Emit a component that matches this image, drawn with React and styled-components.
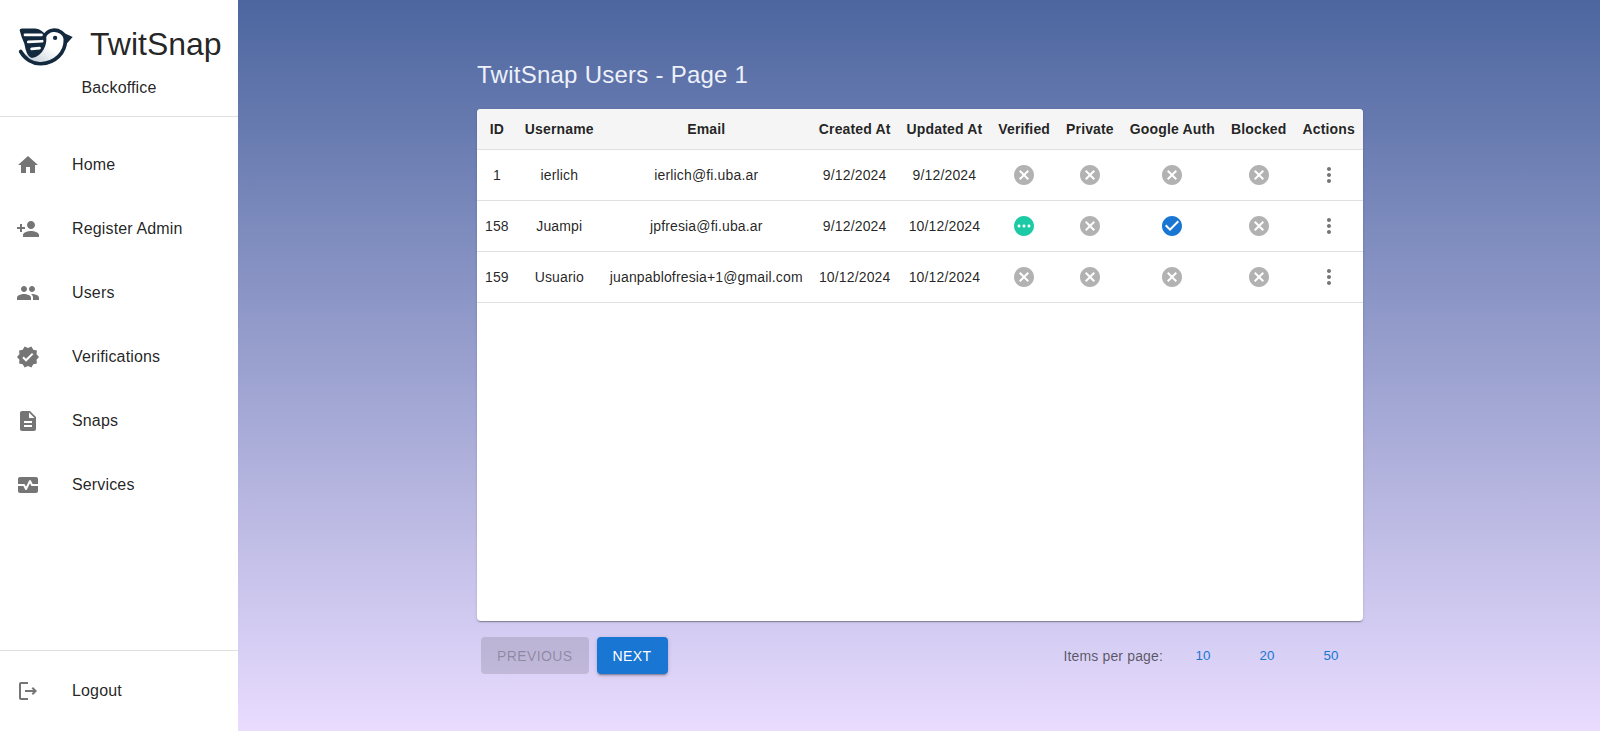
import React from 'react';
import styled, { createGlobalStyle } from 'styled-components';

const GlobalStyle = createGlobalStyle`
  html, body {
    margin: 0;
    padding: 0;
    height: 100%;
    overflow: hidden;
  }
  body {
    font-family: "Liberation Sans", Arial, sans-serif;
    color: rgba(0, 0, 0, 0.87);
  }
`;

const ICONS = {
  home: 'M10 20v-6h4v6h5v-8h3L12 3 2 12h3v8z',
  personAdd: 'M15 12c2.21 0 4-1.79 4-4s-1.79-4-4-4-4 1.79-4 4 1.79 4 4 4m-9-2V7H4v3H1v2h3v3h2v-3h3v-2zm9 4c-2.67 0-8 1.34-8 4v2h16v-2c0-2.66-5.33-4-8-4',
  people: 'M16 11c1.66 0 2.99-1.34 2.99-3S17.66 5 16 5s-3 1.34-3 3 1.34 3 3 3m-8 0c1.66 0 2.99-1.34 2.99-3S9.66 5 8 5 5 6.34 5 8s1.34 3 3 3m0 2c-2.33 0-7 1.17-7 3.5V19h14v-2.5c0-2.33-4.67-3.5-7-3.5m8 0c-.29 0-.62.02-.97.05 1.16.84 1.97 1.97 1.97 3.45V19h6v-2.5c0-2.33-4.67-3.5-7-3.5',
  verified: 'M23 12l-2.44-2.79.34-3.69-3.61-.82-1.89-3.2L12 2.96 8.6 1.5 6.71 4.69 3.1 5.5l.34 3.7L1 12l2.44 2.79-.34 3.7 3.61.82L8.6 22.5l3.4-1.47 3.4 1.46 1.89-3.19 3.61-.82-.34-3.69zm-12.91 4.72-3.8-3.81 1.48-1.48 2.32 2.33 5.85-5.87 1.48 1.48z',
  description: 'M14 2H6c-1.1 0-1.99.9-1.99 2L4 20c0 1.1.89 2 1.99 2H18c1.1 0 2-.9 2-2V8zm2 16H8v-2h8zm0-4H8v-2h8zm-3-5V3.5L18.5 9z',
  monitor: 'M15.11 12.45 14 10.24l-3.11 6.21c-.16.34-.51.55-.89.55s-.73-.21-.89-.55L7.38 13H2v5c0 1.1.9 2 2 2h16c1.1 0 2-.9 2-2v-5h-6c-.38 0-.73-.21-.89-.55M22 6c0-1.1-.9-2-2-2H4c-1.1 0-2 .9-2 2v5h6c.38 0 .73.21.89.55L10 13.76l3.11-6.21c.34-.68 1.45-.68 1.79 0L16.62 11H22z',
  logout: 'M17 8l-1.41 1.41L17.17 11H9v2h8.17l-1.58 1.58L17 16l4-4zM5 5h7V3H5c-1.1 0-2 .9-2 2v14c0 1.1.9 2 2 2h7v-2H5z',
  cancel: 'M12 2C6.47 2 2 6.47 2 12s4.47 10 10 10 10-4.47 10-10S17.53 2 12 2m5 13.59L15.59 17 12 13.41 8.41 17 7 15.59 10.59 12 7 8.41 8.41 7 12 10.59 15.59 7 17 8.41 13.41 12 17 15.59z',
  check: 'M12 2C6.48 2 2 6.48 2 12s4.48 10 10 10 10-4.48 10-10S17.52 2 12 2m-2 15-5-5 1.41-1.41L10 14.17l7.59-7.59L19 8z',
  pending: 'M12 2C6.48 2 2 6.48 2 12s4.48 10 10 10 10-4.48 10-10S17.52 2 12 2M7 13.5c-.83 0-1.5-.67-1.5-1.5s.67-1.5 1.5-1.5 1.5.67 1.5 1.5-.67 1.5-1.5 1.5m5 0c-.83 0-1.5-.67-1.5-1.5s.67-1.5 1.5-1.5 1.5.67 1.5 1.5-.67 1.5-1.5 1.5m5 0c-.83 0-1.5-.67-1.5-1.5s.67-1.5 1.5-1.5 1.5.67 1.5 1.5-.67 1.5-1.5 1.5',
  more: 'M12 8c1.1 0 2-.9 2-2s-.9-2-2-2-2 .9-2 2 .9 2 2 2m0 2c-1.1 0-2 .9-2 2s.9 2 2 2 2-.9 2-2-.9-2-2-2m0 6c-1.1 0-2 .9-2 2s.9 2 2 2 2-.9 2-2-.9-2-2-2',
};

const STATUS_COLORS = {
  cancel: '#b2b2b2',
  check: '#1976d2',
  pending: '#1ccba5',
  more: '#757575',
};

const Page = styled.div`
  display: flex;
  height: 731px;
  background: linear-gradient(180deg, #4c669f 0%, #e9dcff 100%);
`;

const Sidebar = styled.aside`
  width: 240px;
  flex-shrink: 0;
  box-sizing: border-box;
  display: flex;
  flex-direction: column;
  background: #fff;
  background-clip: padding-box;
  border-right: 2px solid transparent;
`;

const Brand = styled.header`
  height: 117px;
  box-sizing: border-box;
  border-bottom: 1px solid #e0e0e0;
  display: flex;
  flex-direction: column;
  align-items: center;
`;

const BrandRow = styled.div`
  display: flex;
  align-items: center;
  width: 100%;
  box-sizing: border-box;
  padding: 26px 0 0 17px;
  height: 68px;
`;

const BrandName = styled.div`
  font-size: 32px;
  line-height: 40px;
  margin-left: 15px;
  margin-top: -6px;
  color: rgba(0, 0, 0, 0.87);
`;

const BrandSub = styled.div`
  font-size: 16px;
  line-height: 20px;
  margin-top: 10px;
  letter-spacing: 0.15px;
  color: rgba(0, 0, 0, 0.87);
`;

const Nav = styled.nav`
  flex: 1;
  padding-top: 16px;
`;

const NavItem = styled.div`
  display: flex;
  align-items: center;
  height: 64px;
  padding-left: 16px;
  font-size: 16px;
  letter-spacing: 0.15px;
`;

const NavIcon = styled.svg`
  width: 24px;
  height: 24px;
  fill: #757575;
  margin-right: 32px;
  flex-shrink: 0;
`;

const SidebarFooter = styled.footer`
  height: 81px;
  box-sizing: border-box;
  border-top: 1px solid #e0e0e0;
  padding-top: 8px;
`;

const Main = styled.main`
  flex: 1;
  display: flex;
  flex-direction: column;
  align-items: center;
`;

const Content = styled.div`
  width: 886px;
`;

const Title = styled.h1`
  margin: 0;
  padding-top: 60px;
  height: 49px;
  font-size: 24px;
  line-height: 30px;
  font-weight: 400;
  color: #eef1fa;
  letter-spacing: 0.25px;
`;

const TableCard = styled.div`
  height: 512px;
  background: #fff;
  border-radius: 4px;
  overflow: hidden;
  box-shadow: 0 2px 1px -1px rgba(0, 0, 0, 0.2), 0 1px 1px 0 rgba(0, 0, 0, 0.14), 0 1px 3px 0 rgba(0, 0, 0, 0.12);
`;

const Table = styled.table`
  width: 100%;
  border-collapse: collapse;
  font-size: 14px;
`;

const HeadCell = styled.th`
  height: 40px;
  box-sizing: border-box;
  padding: 0 8px;
  background: #f5f5f5;
  border-bottom: 1px solid #e0e0e0;
  font-weight: 700;
  font-size: 14px;
  text-align: center;
  white-space: nowrap;
  letter-spacing: 0.15px;
`;

const Cell = styled.td`
  height: 51px;
  box-sizing: border-box;
  padding: 0 8px;
  border-bottom: 1px solid #e0e0e0;
  text-align: center;
  white-space: nowrap;
  letter-spacing: 0.15px;
`;

const StatusSvg = styled.svg`
  display: block;
  margin: 0 auto;
  width: 24px;
  height: 24px;
  fill: ${(p) => STATUS_COLORS[p.$kind]};
`;

const Pager = styled.div`
  display: flex;
  align-items: center;
  justify-content: space-between;
  padding: 16px 0 0 4px;
`;

const PagerButtons = styled.div`
  display: flex;
  gap: 8px;
`;

const PageButton = styled.button`
  height: 37px;
  padding: 0 16px;
  border: 0;
  border-radius: 4px;
  font-family: inherit;
  font-size: 14px;
  font-weight: 400;
  letter-spacing: 0.4px;
  text-transform: uppercase;
  color: ${(p) => (p.disabled ? 'rgba(0, 0, 0, 0.26)' : '#fff')};
  background: ${(p) => (p.disabled ? 'rgba(0, 0, 0, 0.12)' : '#1976d2')};
  box-shadow: ${(p) => (p.disabled ? 'none' : '0 3px 1px -2px rgba(0,0,0,.2), 0 2px 2px 0 rgba(0,0,0,.14), 0 1px 5px 0 rgba(0,0,0,.12)')};
`;

const PerPage = styled.div`
  display: flex;
  align-items: center;
`;

const PerPageLabel = styled.span`
  font-size: 14px;
  letter-spacing: 0.15px;
  color: rgba(0, 0, 0, 0.6);
  margin-right: 8px;
`;

const PerPageOption = styled.button`
  width: 64px;
  height: 37px;
  padding: 0;
  border: 0;
  background: transparent;
  font-family: inherit;
  font-size: 13.33px;
  color: #1976d2;
`;

const Icon = ({ name }) => (
  <NavIcon viewBox="0 0 24 24">
    <path d={ICONS[name]} />
  </NavIcon>
);

const Status = ({ kind }) => (
  <StatusSvg viewBox="0 0 24 24" $kind={kind}>
    <path d={ICONS[kind]} />
  </StatusSvg>
);

// coordinates are the reference x3, easier to trace that way
const BirdLogo = () => (
  <svg width="58" height="42" viewBox="50 80 175 125" style={{ flexShrink: 0 }}>
    <defs>
      <linearGradient id="birdBody" x1="0.9" y1="0.1" x2="0.1" y2="0.9">
        <stop offset="0.4" stopColor="#ffffff" />
        <stop offset="1" stopColor="#bccad3" />
      </linearGradient>
    </defs>
    <path
      d="M60 156 C75 180 98 194 122 193 C165 191 197 160 196 120 C195 100 175 90 158 92 C142 95 134 108 134 122 L95 172 Z"
      fill="url(#birdBody)"
    />
    <path
      d="M61 156 C75 180 98 194 122 193 C165 191 197 160 196 120 C195 100 175 90 158 92 C146 94 138 100 133 110"
      fill="none"
      stroke="#13293d"
      strokeWidth="11"
      strokeLinecap="round"
    />
    <path
      d="M58 92 Q58 87 65 87 L105 87 Q128 90 138 110 C142 135 128 170 95 176 Q82 172 76 150 L72 132 Q62 110 58 92 Z"
      fill="#13293d"
    />
    <path d="M74 106 L124 106 M84 127 L126 125 M94 148 L118 146" stroke="#fff" strokeWidth="8" strokeLinecap="round" fill="none" />
    <circle cx="165" cy="115" r="6.5" fill="#13293d" />
    <path d="M192 100 L218 112 L197 136 Z" fill="#13293d" />
  </svg>
);

const NAV = [
  ['home', 'Home'],
  ['personAdd', 'Register Admin'],
  ['people', 'Users'],
  ['verified', 'Verifications'],
  ['description', 'Snaps'],
  ['monitor', 'Services'],
];

const COLUMNS = ['ID', 'Username', 'Email', 'Created At', 'Updated At', 'Verified', 'Private', 'Google Auth', 'Blocked', 'Actions'];

const USERS = [
  { id: 1, username: 'ierlich', email: 'ierlich@fi.uba.ar', created: '9/12/2024', updated: '9/12/2024', verified: 'cancel', google: 'cancel' },
  { id: 158, username: 'Juampi', email: 'jpfresia@fi.uba.ar', created: '9/12/2024', updated: '10/12/2024', verified: 'pending', google: 'check' },
  { id: 159, username: 'Usuario', email: 'juanpablofresia+1@gmail.com', created: '10/12/2024', updated: '10/12/2024', verified: 'cancel', google: 'cancel' },
];

const App = () => (
  <Page>
    <GlobalStyle />
    <Sidebar>
      <Brand>
        <BrandRow>
          <BirdLogo />
          <BrandName>TwitSnap</BrandName>
        </BrandRow>
        <BrandSub>Backoffice</BrandSub>
      </Brand>
      <Nav>
        {NAV.map(([icon, label]) => (
          <NavItem key={label}>
            <Icon name={icon} />
            {label}
          </NavItem>
        ))}
      </Nav>
      <SidebarFooter>
        <NavItem>
          <Icon name="logout" />
          Logout
        </NavItem>
      </SidebarFooter>
    </Sidebar>
    <Main>
      <Content>
        <Title>TwitSnap Users - Page 1</Title>
        <TableCard>
          <Table>
            <thead>
              <tr>
                {COLUMNS.map((c) => (
                  <HeadCell key={c}>{c}</HeadCell>
                ))}
              </tr>
            </thead>
            <tbody>
              {USERS.map((u) => (
                <tr key={u.id}>
                  <Cell>{u.id}</Cell>
                  <Cell>{u.username}</Cell>
                  <Cell>{u.email}</Cell>
                  <Cell>{u.created}</Cell>
                  <Cell>{u.updated}</Cell>
                  <Cell><Status kind={u.verified} /></Cell>
                  <Cell><Status kind="cancel" /></Cell>
                  <Cell><Status kind={u.google} /></Cell>
                  <Cell><Status kind="cancel" /></Cell>
                  <Cell><Status kind="more" /></Cell>
                </tr>
              ))}
            </tbody>
          </Table>
        </TableCard>
        <Pager>
          <PagerButtons>
            <PageButton disabled>Previous</PageButton>
            <PageButton>Next</PageButton>
          </PagerButtons>
          <PerPage>
            <PerPageLabel>Items per page:</PerPageLabel>
            <PerPageOption>10</PerPageOption>
            <PerPageOption>20</PerPageOption>
            <PerPageOption>50</PerPageOption>
          </PerPage>
        </Pager>
      </Content>
    </Main>
  </Page>
);

export default App;
